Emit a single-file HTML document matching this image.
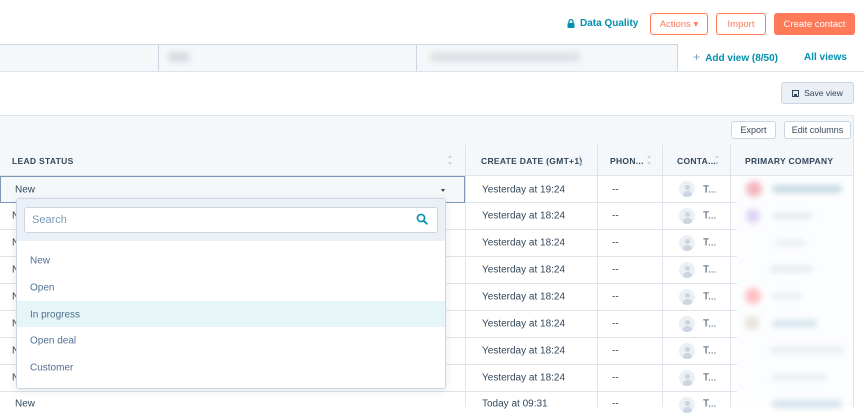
<!DOCTYPE html>
<html><head><meta charset="utf-8"><style>
*{margin:0;padding:0;box-sizing:border-box}
body{width:864px;height:407px;overflow:hidden;background:#fff;font-family:"Liberation Sans",sans-serif;color:#33475b;font-size:10px;position:relative}
.a{position:absolute}
.btn{position:absolute;border:1px solid #ff7a59;border-radius:3px;color:#ff7a59;font-size:9.5px;display:flex;align-items:center;justify-content:center;background:#fff}
.gb{position:absolute;border:1px solid #cbd6e2;border-radius:3px;background:#fff;font-size:9px;display:flex;align-items:center;justify-content:center;color:#33475b}
.hl{position:absolute;left:0;width:853px;height:1px;background:#dfe3eb}
.vl{position:absolute;width:1px;background:#dfe3eb}
.th{position:absolute;top:145px;height:31px;font-size:8.5px;font-weight:bold;letter-spacing:.3px;display:flex;align-items:center;color:#33475b}
.c{position:absolute;font-size:10px;transform:translateY(-50%)}
.sort{position:absolute;width:5px;height:10px}
.sort:before{content:"";position:absolute;top:0;left:0;border:2.5px solid transparent;border-bottom:3px solid #cbd6e2;border-top:0}
.sort:after{content:"";position:absolute;bottom:0;left:0;border:2.5px solid transparent;border-top:3px solid #cbd6e2;border-bottom:0}
.av{position:absolute;left:679px;width:16px;height:16px;border-radius:50%;background:#eaf0f6;overflow:hidden}
.av:before{content:"";position:absolute;left:5.5px;top:3.5px;width:5px;height:5px;border-radius:50%;background:#cbd6e2}
.av:after{content:"";position:absolute;left:3.5px;top:10px;width:9px;height:6px;border-radius:4px 4px 0 0;background:#cbd6e2}
.blur{position:absolute;filter:blur(3px);border-radius:4px}
</style></head><body>
<div class="a" style="left:567px;top:18px;font-size:10px;font-weight:bold;color:#0091ae;display:flex;align-items:center;gap:5px">
<svg width="8" height="9" viewBox="0 0 8 9"><rect x="0.5" y="4" width="7" height="5" rx="1" fill="#0091ae"/><path d="M2 4V2.6a2 2 0 0 1 4 0V4" stroke="#0091ae" stroke-width="1.3" fill="none"/></svg>Data Quality</div>
<div class="btn" style="left:650px;top:13px;width:58px;height:22px">Actions ▾</div>
<div class="btn" style="left:716px;top:13px;width:50px;height:22px">Import</div>
<div class="btn" style="left:774px;top:13px;width:81px;height:22px;background:#ff7a59;color:#fff">Create contact</div>
<div class="a" style="left:0;top:44px;width:678px;height:28px;background:#f5f8fa;border-top:1px solid #cbd6e2;border-bottom:1px solid #cbd6e2"></div>
<div class="vl" style="left:158px;top:44px;height:28px;background:#cbd6e2"></div>
<div class="vl" style="left:416px;top:44px;height:28px;background:#cbd6e2"></div>
<div class="vl" style="left:677px;top:44px;height:28px;background:#cbd6e2"></div>
<div class="blur" style="left:168px;top:52px;width:22px;height:10px;background:#d6dbe1"></div>
<div class="blur" style="left:430px;top:52px;width:150px;height:10px;background:#dde2e7"></div>
<div class="a" style="left:0;top:71px;width:864px;height:1px;background:#dfe3eb"></div>
<div class="a" style="left:693px;top:52px;font-size:10px;font-weight:bold;color:#0091ae"><span style="color:#7c98b6;font-weight:normal;font-size:12px;line-height:10px">+</span>&nbsp; Add view (8/50)</div>
<div class="a" style="left:804px;top:52px;font-size:10px;font-weight:bold;color:#0091ae">All views</div>
<div class="gb" style="left:781px;top:82px;width:73px;height:22px;background:#eaf0f6;gap:5px;font-size:8.5px"><svg width="7" height="7" viewBox="0 0 7 7"><rect x="0.5" y="0.5" width="6" height="6" fill="none" stroke="#33475b"/><rect x="2" y="4" width="3" height="2.5" fill="#33475b"/></svg>Save view</div>
<div class="a" style="left:0;top:115px;width:853px;height:31px;background:#f5f8fa;border-top:1px solid #dfe3eb;border-bottom:1px solid #dfe3eb"></div>
<div class="gb" style="left:731px;top:121px;width:45px;height:18px">Export</div>
<div class="gb" style="left:784px;top:121px;width:67px;height:18px">Edit columns</div>
<div class="a" style="left:0;top:145px;width:853px;height:31px;background:#f5f8fa;border-bottom:1px solid #dfe3eb"></div>
<div class="th" style="left:12px">LEAD STATUS</div><div class="sort" style="left:448px;top:155px"></div>
<div class="th" style="left:481px">CREATE DATE (GMT+1)</div><div class="sort" style="left:578px;top:155px"></div>
<div class="th" style="left:610px">PHON...</div><div class="sort" style="left:647px;top:155px"></div>
<div class="th" style="left:677px">CONTA...</div><div class="sort" style="left:715px;top:155px"></div>
<div class="th" style="left:745px">PRIMARY COMPANY</div>
<div class="hl" style="top:202px"></div><div class="hl" style="top:229px"></div><div class="hl" style="top:256px"></div><div class="hl" style="top:283px"></div><div class="hl" style="top:310px"></div><div class="hl" style="top:337px"></div><div class="hl" style="top:364px"></div><div class="hl" style="top:391px"></div>
<div class="vl" style="left:465px;top:145px;height:262px"></div>
<div class="vl" style="left:597px;top:145px;height:262px"></div>
<div class="vl" style="left:662px;top:145px;height:262px"></div>
<div class="vl" style="left:730px;top:145px;height:262px"></div>
<div class="vl" style="left:853px;top:115px;height:292px"></div>
<div class="a" style="left:0;top:176px;width:465px;height:27px;border:1px solid #7c98b6;background:#f5f8fa"></div>
<div class="c" style="left:15px;top:190px">New</div>
<div class="a" style="left:441px;top:189px;border:2.5px solid transparent;border-top:3px solid #33475b"></div>
<div class="c" style="left:15px;top:404px">New</div>
<div class="c" style="left:12px;top:216px">N</div><div class="c" style="left:12px;top:243px">N</div><div class="c" style="left:12px;top:270px">N</div><div class="c" style="left:12px;top:297px">N</div><div class="c" style="left:12px;top:324px">N</div><div class="c" style="left:12px;top:351px">N</div><div class="c" style="left:12px;top:378px">N</div>
<div class="c" style="left:482px;top:190px">Yesterday at 19:24</div>
<div class="c" style="left:482px;top:216px">Yesterday at 18:24</div>
<div class="c" style="left:482px;top:243px">Yesterday at 18:24</div>
<div class="c" style="left:482px;top:270px">Yesterday at 18:24</div>
<div class="c" style="left:482px;top:297px">Yesterday at 18:24</div>
<div class="c" style="left:482px;top:324px">Yesterday at 18:24</div>
<div class="c" style="left:482px;top:351px">Yesterday at 18:24</div>
<div class="c" style="left:482px;top:378px">Yesterday at 18:24</div>
<div class="c" style="left:482px;top:404px">Today at 09:31</div>
<div class="c" style="left:612px;top:190px">--</div><div class="c" style="left:612px;top:216px">--</div><div class="c" style="left:612px;top:243px">--</div><div class="c" style="left:612px;top:270px">--</div><div class="c" style="left:612px;top:297px">--</div><div class="c" style="left:612px;top:324px">--</div><div class="c" style="left:612px;top:351px">--</div><div class="c" style="left:612px;top:378px">--</div><div class="c" style="left:612px;top:404px">--</div>
<div class="av" style="top:181px"></div><div class="c" style="left:703px;top:190px">T...</div>
<div class="av" style="top:208px"></div><div class="c" style="left:703px;top:216px">T...</div>
<div class="av" style="top:235px"></div><div class="c" style="left:703px;top:243px">T...</div>
<div class="av" style="top:262px"></div><div class="c" style="left:703px;top:270px">T...</div>
<div class="av" style="top:289px"></div><div class="c" style="left:703px;top:297px">T...</div>
<div class="av" style="top:316px"></div><div class="c" style="left:703px;top:324px">T...</div>
<div class="av" style="top:343px"></div><div class="c" style="left:703px;top:351px">T...</div>
<div class="av" style="top:370px"></div><div class="c" style="left:703px;top:378px">T...</div>
<div class="av" style="top:397px"></div><div class="c" style="left:703px;top:404px">T...</div>
<div class="a" style="left:737px;top:177px;width:116px;height:230px;background:#fcfdfe"></div>
<div class="blur" style="left:746px;top:181px;width:16px;height:16px;background:#f4b8c0;border-radius:50%"></div>
<div class="blur" style="left:772px;top:185px;width:70px;height:8px;background:#c8dbe5"></div>
<div class="blur" style="left:746px;top:209px;width:14px;height:14px;background:#ddd2f4;border-radius:50%"></div>
<div class="blur" style="left:772px;top:213px;width:40px;height:6px;background:#e3e8ee"></div>
<div class="blur" style="left:775px;top:240px;width:30px;height:6px;background:#e8ecf0"></div>
<div class="blur" style="left:770px;top:266px;width:42px;height:6px;background:#e3e9ee"></div>
<div class="blur" style="left:745px;top:288px;width:16px;height:16px;background:#ffc0c4;border-radius:50%"></div>
<div class="blur" style="left:772px;top:293px;width:30px;height:6px;background:#e8ecf0"></div>
<div class="blur" style="left:745px;top:316px;width:14px;height:14px;background:#e8e4d8;border-radius:50%"></div>
<div class="blur" style="left:772px;top:320px;width:45px;height:7px;background:#d3e4ec"></div>
<div class="blur" style="left:770px;top:347px;width:75px;height:6px;background:#e8ecf0"></div>
<div class="blur" style="left:772px;top:374px;width:55px;height:6px;background:#e8ecf0"></div>
<div class="blur" style="left:772px;top:400px;width:70px;height:8px;background:#d3e4ec"></div>
<div class="a" style="left:16px;top:198px;width:430px;height:191px;background:#fff;border:1px solid #cbd6e2;border-radius:3px;box-shadow:0 2px 8px rgba(45,62,80,.12)"></div>
<div class="a" style="left:17px;top:199px;width:428px;height:42px;background:#eaf0f6"></div>
<div class="a" style="left:24px;top:207px;width:414px;height:26px;background:#fff;border:1px solid #cbd6e2;border-radius:3px"></div>
<div class="c" style="left:32px;top:220px;font-size:11px;color:#7c98b6">Search</div>
<svg class="a" style="left:416px;top:213px" width="12" height="12" viewBox="0 0 12 12"><circle cx="5" cy="5" r="3.6" stroke="#0091ae" stroke-width="1.6" fill="none"/><path d="M7.7 7.7L10.8 10.8" stroke="#0091ae" stroke-width="1.8" stroke-linecap="round"/></svg>
<div class="a" style="left:17px;top:301px;width:428px;height:26px;background:#e5f5f8"></div>
<div class="c" style="left:30px;top:261px;color:#516f90">New</div>
<div class="c" style="left:30px;top:288px;color:#516f90">Open</div>
<div class="c" style="left:30px;top:315px;color:#516f90">In progress</div>
<div class="c" style="left:30px;top:341px;color:#516f90">Open deal</div>
<div class="c" style="left:30px;top:368px;color:#516f90">Customer</div>
</body></html>
